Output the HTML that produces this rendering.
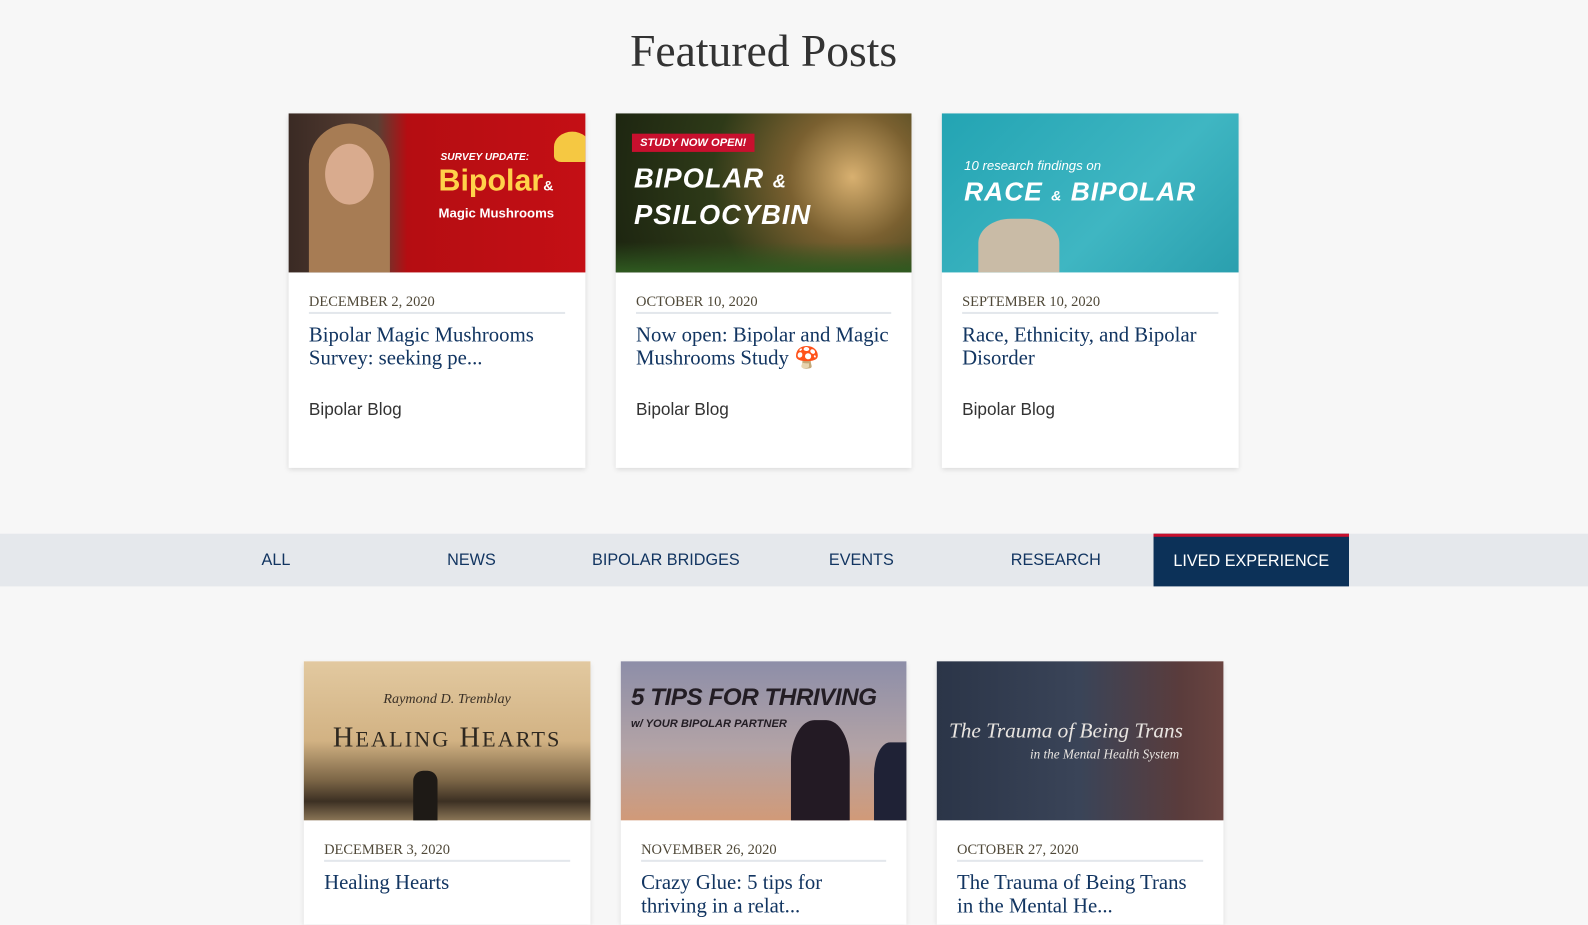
<!DOCTYPE html><html><head><style>
body{margin:0;width:1588px;height:904px;background:#f7f7f7;overflow:hidden;font-family:"Liberation Sans",sans-serif}
#w{position:relative;width:1568px;height:893px;transform:scale(1.01276);transform-origin:0 0}
.h{position:absolute;left:0;width:1508px;top:24px;text-align:center;font-family:"Liberation Serif",serif;font-size:45px;color:#333;margin:0;font-weight:normal}
.card{position:absolute;background:#fff;box-shadow:0 2px 5px rgba(0,0,0,.12)}
.img{position:absolute;left:0;top:0;right:0;height:157px;overflow:hidden;white-space:nowrap}
.d{position:absolute;left:20px;right:20px;font-family:"Liberation Serif",serif;font-size:14.3px;color:#4f4838;border-bottom:2px solid #e3e7ec;padding-bottom:1px}
.t{position:absolute;left:20px;right:4px;font-family:"Liberation Serif",serif;font-size:20.5px;line-height:23px;color:#123561;white-space:nowrap}
.c{position:absolute;left:20px;font-size:17px;color:#333}
.nav{position:absolute;left:0;top:527px;width:1588px;height:52px;background:#e5e8ec}
.tab{position:absolute;top:0;height:52px;width:193px;text-align:center;line-height:53px;font-size:16px;color:#123561}
.act{background:#0c3158;color:#fff;border-top:3px solid #c8102e;height:49px;line-height:49px}
.it{position:absolute;font-family:"Liberation Sans",sans-serif;font-weight:bold;font-style:italic}
</style></head><body><div id="w">
<h1 class="h">Featured Posts</h1>

<div class="card" style="left:285px;top:112px;width:293px;height:350px">
<div class="img" style="background:linear-gradient(90deg,#3a2a24 0,#5a4034 30%,#b50d12 40%,#c40f15 100%)">
<div style="position:absolute;left:20px;top:10px;width:80px;height:150px;border-radius:40px 40px 0 0;background:#a77c54"></div>
<div style="position:absolute;left:36px;top:30px;width:48px;height:60px;border-radius:50%;background:#d9ab8e"></div>
<div class="it" style="left:150px;top:38px;font-size:10px;color:#fff">SURVEY UPDATE:</div>
<div class="it" style="left:148px;top:50px;font-size:30px;color:#ffd24a;font-style:normal">Bipolar<span style="font-size:14px;color:#fff">&amp;</span></div>
<div class="it" style="left:148px;top:91px;font-size:13px;color:#fff;font-style:normal">Magic Mushrooms</div>
<div style="position:absolute;left:262px;top:18px;width:36px;height:30px;border-radius:50% 50% 20% 20%;background:#f5c842"></div>
</div>
<div class="d" style="top:178px">DECEMBER 2, 2020</div>
<div class="t" style="top:208px">Bipolar Magic Mushrooms<br>Survey: seeking pe...</div>
<div class="c" style="top:283px">Bipolar Blog</div></div>

<div class="card" style="left:608px;top:112px;width:292px;height:350px">
<div class="img" style="background:radial-gradient(circle at 80% 40%,#d8b070 0,#7a6030 25%,#2e3a18 55%,#1c2410 100%)">
<div style="position:absolute;left:16px;top:20px;background:#c8102e;color:#fff;font:bold italic 11px 'Liberation Sans';padding:3px 8px">STUDY NOW OPEN!</div>
<div class="it" style="left:18px;top:48px;font-size:27px;color:#fff;line-height:33px;letter-spacing:1px">BIPOLAR <span style="font-size:18px">&amp;</span><br>PSILOCYBIN</div>
<div style="position:absolute;left:0;right:0;bottom:0;height:30px;background:linear-gradient(#0000,#2f5a20)"></div>
</div>
<div class="d" style="top:178px">OCTOBER 10, 2020</div>
<div class="t" style="top:208px">Now open: Bipolar and Magic<br>Mushrooms Study <span style="color:#d33">🍄</span></div>
<div class="c" style="top:283px">Bipolar Blog</div></div>

<div class="card" style="left:930px;top:112px;width:293px;height:350px">
<div class="img" style="background:linear-gradient(135deg,#23a4b3,#3fb6c2 60%,#2a9fae)">
<div class="it" style="left:22px;top:44px;font-size:13px;color:#fff;font-weight:normal">10 research findings on</div>
<div class="it" style="left:22px;top:62px;font-size:26px;color:#fff;letter-spacing:1px">RACE <span style="font-size:14px">&amp;</span> BIPOLAR</div>
<div style="position:absolute;left:36px;top:104px;width:80px;height:60px;border-radius:40% 40% 0 0;background:#c9bba6"></div>
</div>
<div class="d" style="top:178px">SEPTEMBER 10, 2020</div>
<div class="t" style="top:208px">Race, Ethnicity, and Bipolar<br>Disorder</div>
<div class="c" style="top:283px">Bipolar Blog</div></div>

<div class="nav">
<div class="tab" style="left:176px">ALL</div>
<div class="tab" style="left:369px">NEWS</div>
<div class="tab" style="left:561px">BIPOLAR BRIDGES</div>
<div class="tab" style="left:754px">EVENTS</div>
<div class="tab" style="left:946px">RESEARCH</div>
<div class="tab act" style="left:1139px">LIVED EXPERIENCE</div>
</div>

<div class="card" style="left:300px;top:653px;width:283px;height:260px">
<div class="img" style="background:linear-gradient(#e2c9a0 0,#d2b283 50%,#7b6546 75%,#3c3023 88%,#8a7556 100%)">
<div style="position:absolute;left:0;right:0;top:30px;text-align:center;font:italic 14px 'Liberation Serif';color:#3a3026">Raymond D. Tremblay</div>
<div style="position:absolute;left:0;right:0;top:60px;text-align:center;font:28px 'Liberation Serif';color:#2e2820;letter-spacing:2px">H<span style="font-size:22px">EALING</span> H<span style="font-size:22px">EARTS</span></div>
<div style="position:absolute;left:108px;top:108px;width:24px;height:50px;border-radius:10px 10px 0 0;background:#1e1a16"></div>
</div>
<div class="d" style="top:178px">DECEMBER 3, 2020</div>
<div class="t" style="top:208px">Healing Hearts</div></div>

<div class="card" style="left:613px;top:653px;width:282px;height:260px">
<div class="img" style="background:linear-gradient(#8d8ea8,#b3a3a6 55%,#d19a78)">
<div class="it" style="left:10px;top:22px;font-size:24px;color:#231d24;letter-spacing:-0.5px">5 TIPS FOR THRIVING</div>
<div class="it" style="left:10px;top:56px;font-size:11px;color:#231d24">w/ YOUR BIPOLAR PARTNER</div>
<div style="position:absolute;left:168px;top:58px;width:58px;height:100px;border-radius:40% 40% 0 0;background:#231a24"></div>
<div style="position:absolute;left:250px;top:80px;width:40px;height:80px;border-radius:40% 0 0 0;background:#1f2236"></div>
</div>
<div class="d" style="top:178px">NOVEMBER 26, 2020</div>
<div class="t" style="top:208px">Crazy Glue: 5 tips for<br>thriving in a relat...</div></div>

<div class="card" style="left:925px;top:653px;width:283px;height:260px">
<div class="img" style="background:linear-gradient(90deg,#2b3548,#3a4458 50%,#5a3c3c 85%,#6a4440)">
<div style="position:absolute;left:12px;top:56px;font:italic 21px 'Liberation Serif';color:#e8e4e0">The Trauma of Being Trans</div>
<div style="position:absolute;left:92px;top:84px;font:italic 13px 'Liberation Serif';color:#e8e4e0">in the Mental Health System</div>
</div>
<div class="d" style="top:178px">OCTOBER 27, 2020</div>
<div class="t" style="top:208px">The Trauma of Being Trans<br>in the Mental He...</div></div>
</div></body></html>
